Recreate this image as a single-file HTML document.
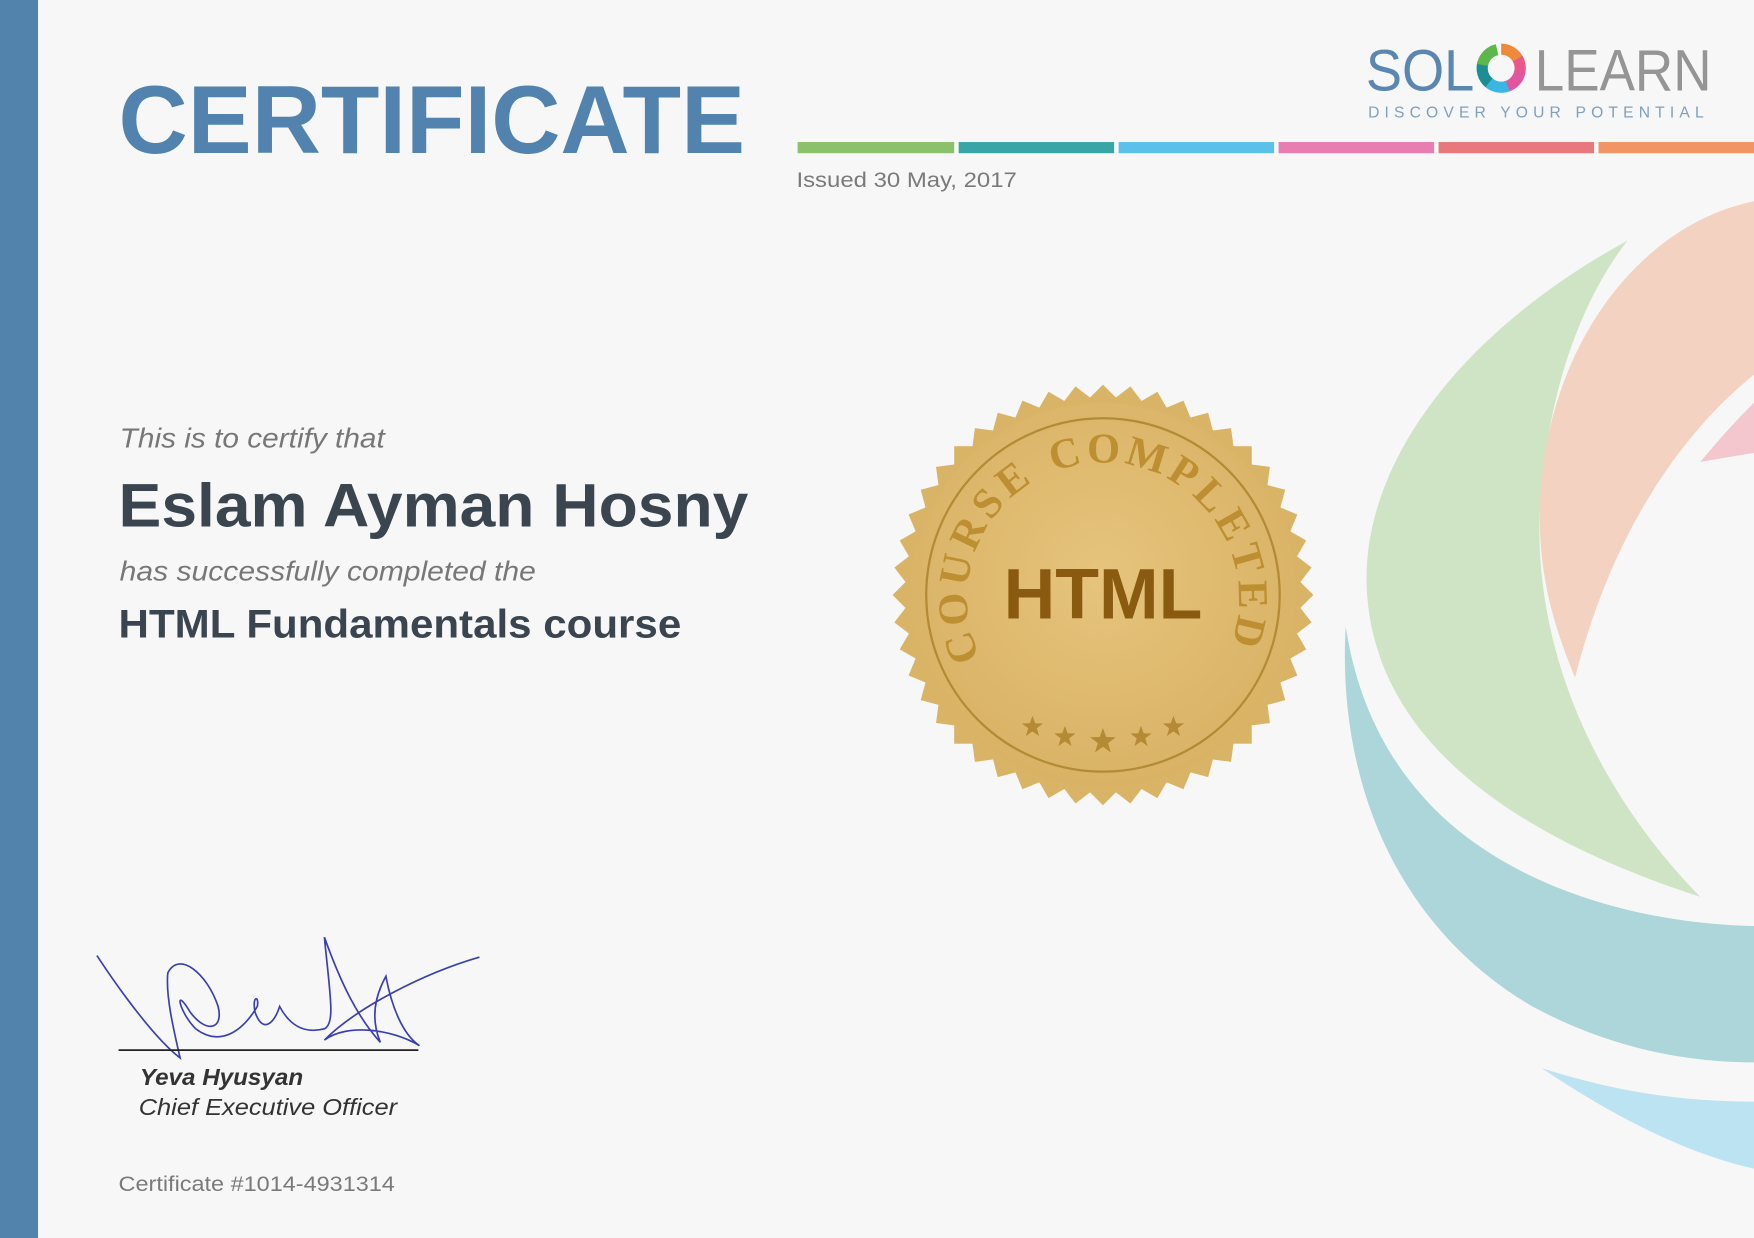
<!DOCTYPE html>
<html><head><meta charset="utf-8"><style>
html,body{margin:0;padding:0;background:#f7f7f7;overflow:hidden}
svg{display:block}
</style></head><body>
<svg width="1754" height="1238" viewBox="0 0 1568 1107" preserveAspectRatio="none" xmlns="http://www.w3.org/2000/svg">
<defs>
<radialGradient id="g" cx="50%" cy="45%" r="55%">
<stop offset="0" stop-color="#e6c47c"/><stop offset="1" stop-color="#d9b265"/>
</radialGradient>
<path id="arc" d="M 855 604 A 148 148 0 1 1 1117 604"/>
<polygon id="st" points="0,-10 2.4,-3.3 9.5,-3.1 3.8,1.2 5.9,8.1 0,4 -5.9,8.1 -3.8,1.2 -9.5,-3.1 -2.4,-3.3"/>
</defs>
<rect width="1568" height="1107" fill="#f7f7f7"/>
<rect width="34" height="1107" fill="#5283ad"/>

<path d="M1455 215 C1300 300 1215 420 1222 530 C1230 650 1330 740 1520 802 C1420 700 1360 560 1380 420 C1390 330 1420 260 1455 215Z" fill="#cfe4c4"/>
<path d="M1568 180 C1470 200 1390 300 1378 430 C1372 500 1385 550 1408 606 C1440 480 1500 390 1568 335Z" fill="#f3d2c1"/>
<path d="M1568 360 L1568 405 L1520 413 C1535 395 1550 378 1568 360Z" fill="#f3c7cd"/>
<path d="M1203 560 C1195 700 1250 830 1370 900 C1440 938 1510 950 1568 950 L1568 828 C1440 825 1330 780 1270 710 C1235 670 1212 620 1203 560Z" fill="#acd6da"/>
<path d="M1378 955 C1430 990 1500 1030 1568 1045 L1568 985 C1500 985 1440 975 1378 955Z" fill="#bce3f1"/>

<text x="106" y="137" font-family="Liberation Sans, sans-serif" font-weight="bold" font-size="86" fill="#5282ae" textLength="560" lengthAdjust="spacingAndGlyphs">CERTIFICATE</text>

<rect x="713" y="127" width="140" height="10" fill="#8bc16b"/>
<rect x="857" y="127" width="139" height="10" fill="#3aa5a7"/>
<rect x="1000" y="127" width="139" height="10" fill="#5bc1ea"/>
<rect x="1143" y="127" width="139" height="10" fill="#e77db1"/>
<rect x="1286" y="127" width="139" height="10" fill="#e8787b"/>
<rect x="1429" y="127" width="139" height="10" fill="#f09563"/>
<text x="712" y="167" font-family="Liberation Sans, sans-serif" font-size="19" fill="#7a7a7a" textLength="197" lengthAdjust="spacingAndGlyphs">Issued 30 May, 2017</text>

<text x="1221" y="81" font-family="Liberation Sans, sans-serif" font-size="52" fill="#5a87b2" textLength="97" lengthAdjust="spacingAndGlyphs">SOL</text>
<g transform="translate(1342,61)">
<circle r="17" fill="none" stroke="#ef8a3c" stroke-width="10" stroke-dasharray="20 200" transform="rotate(-90)"/>
<circle r="17" fill="none" stroke="#e8588a" stroke-width="10" stroke-dasharray="20 200" transform="rotate(-30)"/>
<circle r="17" fill="none" stroke="#e2569f" stroke-width="10" stroke-dasharray="20 200" transform="rotate(10)"/>
<circle r="17" fill="none" stroke="#3ab6e3" stroke-width="10" stroke-dasharray="20 200" transform="rotate(70)"/>
<circle r="17" fill="none" stroke="#1e8e96" stroke-width="10" stroke-dasharray="20 200" transform="rotate(130)"/>
<circle r="17" fill="none" stroke="#5cb84a" stroke-width="10" stroke-dasharray="20 200" transform="rotate(190)"/>
</g>
<text x="1372" y="81" font-family="Liberation Sans, sans-serif" font-size="52" fill="#959595" textLength="158" lengthAdjust="spacingAndGlyphs">LEARN</text>
<text x="1223" y="105" font-family="Liberation Sans, sans-serif" font-size="14" fill="#7f9fbd" textLength="300" lengthAdjust="spacing">DISCOVER YOUR POTENTIAL</text>

<text x="107" y="400" font-family="Liberation Sans, sans-serif" font-style="italic" font-size="25" fill="#777" textLength="237" lengthAdjust="spacingAndGlyphs">This is to certify that</text>
<text x="106" y="471" font-family="Liberation Sans, sans-serif" font-weight="bold" font-size="55" fill="#3b4550" textLength="563" lengthAdjust="spacingAndGlyphs">Eslam Ayman Hosny</text>
<text x="107" y="519" font-family="Liberation Sans, sans-serif" font-style="italic" font-size="25" fill="#777" textLength="372" lengthAdjust="spacingAndGlyphs">has successfully completed the</text>
<text x="106" y="570" font-family="Liberation Sans, sans-serif" font-weight="bold" font-size="36" fill="#3b4550" textLength="503" lengthAdjust="spacingAndGlyphs">HTML Fundamentals course</text>

<g transform="translate(986,532)" fill="#dab466">
<rect x="-133" y="-133" width="266" height="266"/>
<rect x="-133" y="-133" width="266" height="266" transform="rotate(7.5)"/>
<rect x="-133" y="-133" width="266" height="266" transform="rotate(15)"/>
<rect x="-133" y="-133" width="266" height="266" transform="rotate(22.5)"/>
<rect x="-133" y="-133" width="266" height="266" transform="rotate(30)"/>
<rect x="-133" y="-133" width="266" height="266" transform="rotate(37.5)"/>
<rect x="-133" y="-133" width="266" height="266" transform="rotate(45)"/>
<rect x="-133" y="-133" width="266" height="266" transform="rotate(52.5)"/>
<rect x="-133" y="-133" width="266" height="266" transform="rotate(60)"/>
<rect x="-133" y="-133" width="266" height="266" transform="rotate(67.5)"/>
<rect x="-133" y="-133" width="266" height="266" transform="rotate(75)"/>
<rect x="-133" y="-133" width="266" height="266" transform="rotate(82.5)"/>
<circle r="172" fill="url(#g)"/>
<circle r="158" fill="none" stroke="#b38a35" stroke-width="2"/>
</g>
<text font-family="Liberation Serif, serif" font-weight="bold" font-size="38" fill="#bd8f32"><textPath href="#arc" startOffset="8" textLength="575" lengthAdjust="spacing" dominant-baseline="hanging">COURSE  COMPLETED</textPath></text>
<text x="986" y="553" text-anchor="middle" font-family="Liberation Sans, sans-serif" font-weight="bold" font-size="64" fill="#8a5a10">HTML</text>
<g fill="#b58a35">
<use href="#st" transform="translate(923,650)"/>
<use href="#st" transform="translate(952,659)"/>
<use href="#st" transform="translate(986,663) scale(1.2)"/>
<use href="#st" transform="translate(1020,659)"/>
<use href="#st" transform="translate(1049,650)"/>
</g>

<g fill="none" stroke="#3a3fb0" stroke-width="1.5" stroke-linecap="round">
<path d="M87 855 C110 890 140 930 161 946 C155 920 148 890 150 870 C160 850 185 870 195 900 C200 920 185 925 170 905 C155 880 160 905 175 920 C195 935 215 925 230 900 C232 890 225 890 228 905 C235 925 245 915 250 900 C258 915 270 925 290 920 C300 915 295 890 290 838 C305 880 320 910 340 932 C335 920 330 900 345 873 C350 900 360 925 375 935 C350 920 310 915 290 930 C320 900 380 870 428 856"/>
</g>
<line x1="106" y1="939" x2="374" y2="939" stroke="#222" stroke-width="1.5"/>
<text x="125" y="970" font-family="Liberation Sans, sans-serif" font-style="italic" font-weight="bold" font-size="21" fill="#333" textLength="146" lengthAdjust="spacingAndGlyphs">Yeva Hyusyan</text>
<text x="124" y="997" font-family="Liberation Sans, sans-serif" font-style="italic" font-size="21" fill="#333" textLength="231" lengthAdjust="spacingAndGlyphs">Chief Executive Officer</text>
<text x="106" y="1065" font-family="Liberation Sans, sans-serif" font-size="19" fill="#7a7a7a" textLength="247" lengthAdjust="spacingAndGlyphs">Certificate #1014-4931314</text>
</svg>
</body></html>
